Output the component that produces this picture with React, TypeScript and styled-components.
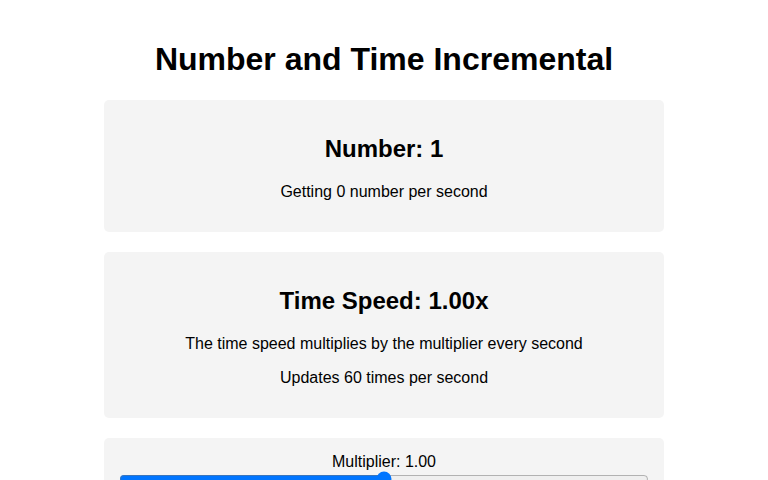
import React, { useState } from 'react'
import styled, { createGlobalStyle } from 'styled-components'

const GlobalStyle = createGlobalStyle`
  body {
    margin: 0;
    padding: 20px;
    font-family: "Liberation Sans", Arial, sans-serif;
    background: #fff;
    color: #000;
    text-align: center;
  }
`

const Page = styled.div`
  max-width: 560px;
  margin: 0 auto;
`

const Title = styled.h1`
  font-size: 32px;
  margin: 21.44px 0;
`

const Card = styled.div`
  background: #f4f4f4;
  border-radius: 5px;
  padding: 15px;
  margin-bottom: 20px;
`

const Heading = styled.h2`
  font-size: 24px;
  margin: 19.92px 0;
`

const Text = styled.p`
  font-size: 16px;
  margin: 16px 0;
`

const Label = styled.label`
  display: block;
  font-size: 16px;
`

const Slider = styled.input`
  display: block;
  width: 100%;
  margin: 0;
`

export default function App() {
  const [multiplier, setMultiplier] = useState(1)

  return (
    <Page>
      <GlobalStyle />
      <Title>Number and Time Incremental</Title>

      <Card>
        <Heading>Number: 1</Heading>
        <Text>Getting 0 number per second</Text>
      </Card>

      <Card>
        <Heading>Time Speed: 1.00x</Heading>
        <Text>The time speed multiplies by the multiplier every second</Text>
        <Text>Updates 60 times per second</Text>
      </Card>

      <Card>
        <Label htmlFor="multiplier">Multiplier: {multiplier.toFixed(2)}</Label>
        <Slider
          id="multiplier"
          type="range"
          min={0}
          max={2}
          step={0.01}
          value={multiplier}
          onChange={(e) => setMultiplier(parseFloat(e.target.value))}
        />
      </Card>
    </Page>
  )
}
